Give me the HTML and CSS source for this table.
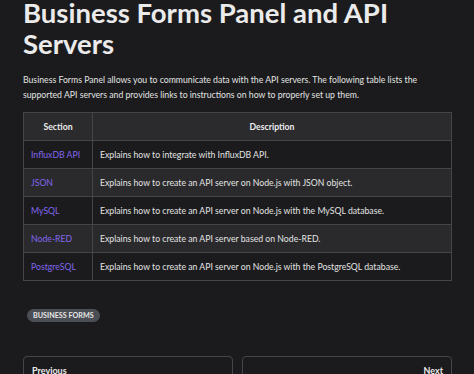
FILE: index.html
```html
<!DOCTYPE html>
<html lang="en">
<head>
<meta charset="utf-8">
<title>Business Forms Panel and API Servers</title>
<link rel="stylesheet" href="styles.css">
</head>
<body>
<main class="doc">
  <h1 class="title">Business Forms Panel and API Servers</h1>
  <p class="intro">Business Forms Panel allows you to communicate data with the API servers. The following table lists the supported API servers and provides links to instructions on how to properly set up them.</p>
  <table class="servers">
    <colgroup><col class="col-section"><col></colgroup>
    <thead>
      <tr><th>Section</th><th>Description</th></tr>
    </thead>
    <tbody>
      <tr><td><a href="#">InfluxDB API</a></td><td>Explains how to integrate with InfluxDB API.</td></tr>
      <tr><td><a href="#">JSON</a></td><td>Explains how to create an API server on Node.js with JSON object.</td></tr>
      <tr><td><a href="#">MySQL</a></td><td>Explains how to create an API server on Node.js with the MySQL database.</td></tr>
      <tr><td><a href="#">Node-RED</a></td><td>Explains how to create an API server based on Node-RED.</td></tr>
      <tr><td><a href="#">PostgreSQL</a></td><td>Explains how to create an API server on Node.js with the PostgreSQL database.</td></tr>
    </tbody>
  </table>
  <div class="tags"><a class="tag" href="#">BUSINESS FORMS</a></div>
  <nav class="pager">
    <a class="pager-link" href="#"><span class="pager-label">Previous</span></a>
    <a class="pager-link pager-next" href="#"><span class="pager-label">Next</span></a>
  </nav>
</main>
</body>
</html>
```
FILE: styles.css
```css
html, body {
  margin: 0;
  padding: 0;
  background: #1b1b1d;
  color: #e3e3e3;
  font-family: "Lato", "Open Sans", sans-serif;
}
.doc {
  padding: 0 22px 0 23px;
}
.title {
  margin: -3px 0 0;
  font-size: 27.5px;
  line-height: 31px;
  font-weight: 700;
  color: #ebebeb;
}
.intro {
  margin: 13px 0 0;
  font-size: 8.7px;
  line-height: 15px;
  color: #e3e3e3;
}
.servers {
  margin-top: 10px;
  width: 100%;
  table-layout: fixed;
  border-collapse: collapse;
  font-size: 8.7px;
}
.col-section { width: 69px; }
.servers th, .servers td {
  border: 1px solid #444548;
  height: 27px;
  padding: 0 7px;
  text-align: left;
  white-space: nowrap;
}
.servers th {
  background: #2b2b2e;
  text-align: center;
  font-weight: 700;
  color: #ececec;
}
.servers tbody tr:nth-child(odd) { background: #1b1b1d; }
.servers tbody tr:nth-child(even) { background: #2a2a2d; }
.servers a {
  color: #8266ee;
  text-decoration: none;
}
.tags {
  display: flex;
  margin-top: 28px;
  padding-left: 4px;
}
.tag {
  background: #4b4e54;
  color: #e6e6e6;
  font-size: 7.2px;
  font-weight: 700;
  line-height: 13px;
  padding: 0 6px;
  border-radius: 7px;
  text-decoration: none;
}
.pager {
  margin-top: 34px;
  display: grid;
  grid-template-columns: 1fr 1fr;
  gap: 9px;
}
.pager-link {
  border: 1px solid #444548;
  border-radius: 4px;
  padding: 8px 8px;
  height: 40px;
  color: #ececec;
  text-decoration: none;
  font-size: 9px;
  line-height: 12px;
  font-weight: 700;
}
.pager-next { text-align: right; }
```
